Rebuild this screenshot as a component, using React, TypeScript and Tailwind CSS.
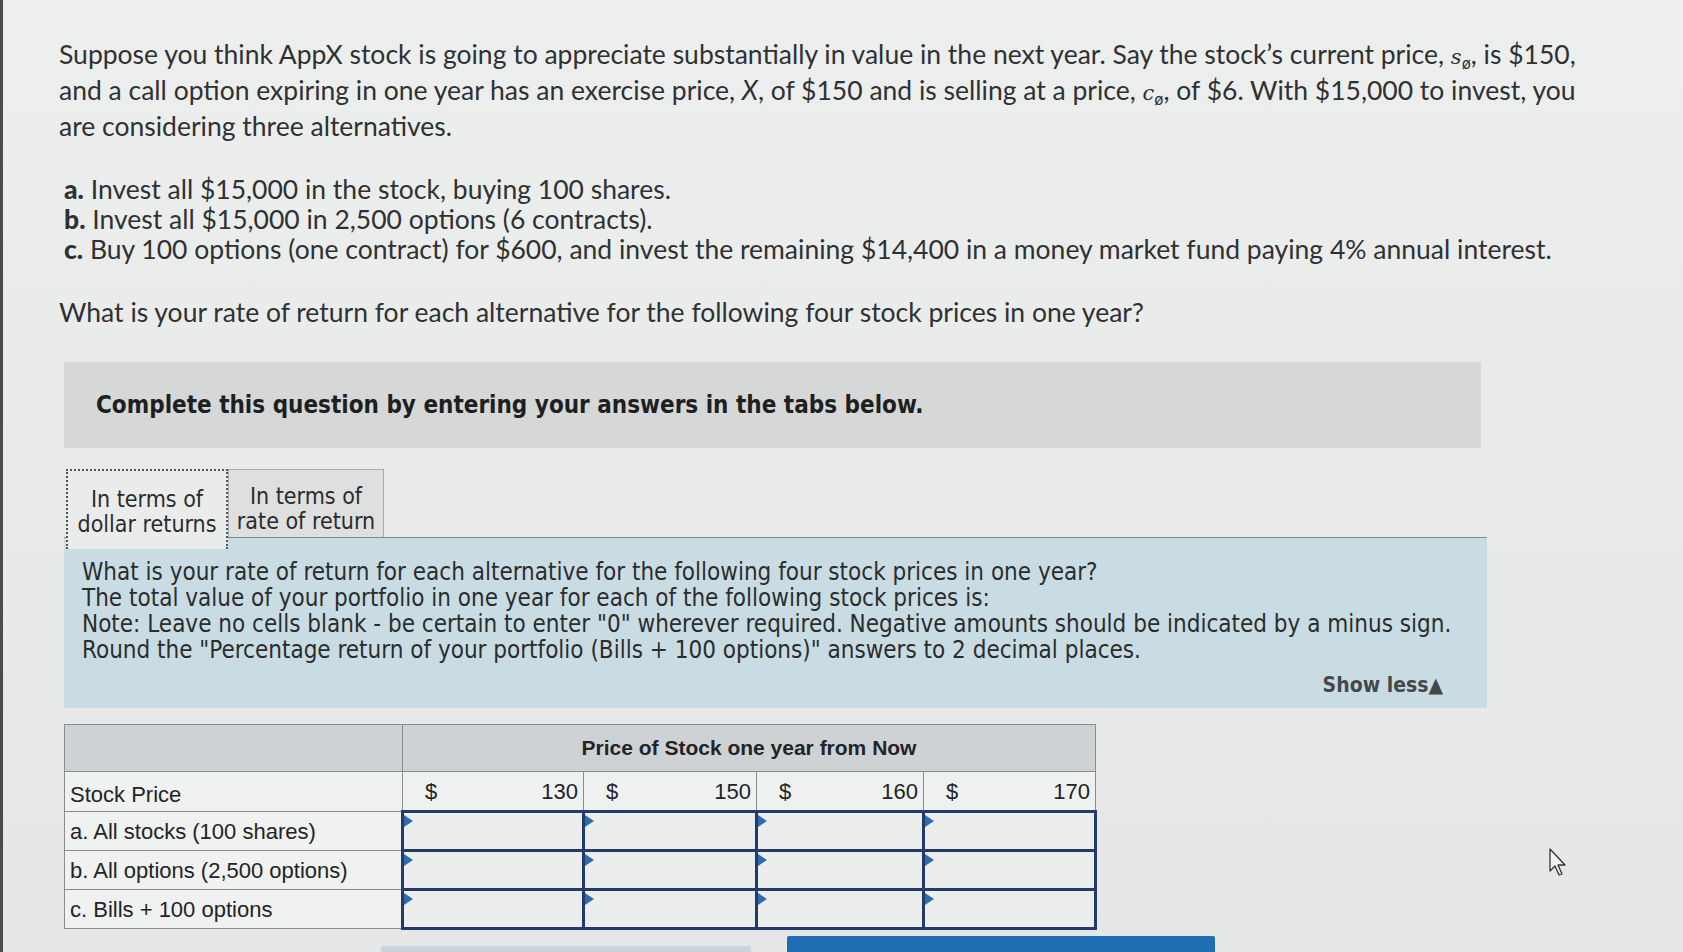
const prices = ['130', '150', '160', '170'];
const rows = ['a. All stocks (100 shares)', 'b. All options (2,500 options)', 'c. Bills + 100 options'];
const colW = ['w-[181px]', 'w-[173px]', 'w-[167px]', 'w-[172px]'];

function Sub({ base }: { base: string }) {
  return (
    <span className="whitespace-nowrap leading-none">
      <span className="italic font-['DejaVu_Serif',serif] text-[21px] leading-none">{base}</span>
      <span className="relative top-[5px] text-[15px] leading-none font-['DejaVu_Sans',sans-serif]">ø</span>
    </span>
  );
}

function Marker() {
  return (
    <svg className="absolute left-0 top-[2px]" width="9" height="12" viewBox="0 0 9 12">
      <path d="M0 0 L9 6 L0 12 Z" fill="#2e6cb0" />
    </svg>
  );
}

function Cursor() {
  return (
    <svg className="absolute left-[1546px] top-[848px]" width="20" height="30" viewBox="0 0 20 30">
      <path d="M1 1 L1 23 L6 18 L10 27 L13 26 L9 17 L16 17 Z" fill="#f4f4f4" stroke="#333" strokeWidth="1.3" strokeLinejoin="round" />
    </svg>
  );
}

export default function App() {
  return (
    <div className="relative h-[952px] w-full overflow-hidden border-l-[3px] border-[#4b4b4b] bg-gradient-to-b from-[#edefee] via-[#e9ebea] to-[#e4e7e6] text-[#2f3133]">
      <div className="pl-[56px] pt-[36px]">
        {/* question text */}
        <div className="font-['Lato',sans-serif] text-[26.5px] leading-[36px] whitespace-nowrap">
          <div className="h-[36px]">
            Suppose you think AppX stock is going to appreciate substantially in value in the next year. Say the stock’s current price, <Sub base="s" />, is $150,
          </div>
          <div className="h-[36px]">
            and a call option expiring in one year has an exercise price, <i>X</i>, of $150 and is selling at a price, <Sub base="c" />, of $6. With $15,000 to invest, you
          </div>
          <div className="h-[36px]">are considering three alternatives.</div>
        </div>

        <div className="mt-[30px] pl-[5px] font-['Lato',sans-serif] text-[26.5px] leading-[30px] whitespace-nowrap">
          <div>
            <b className="font-black">a.</b> Invest all $15,000 in the stock, buying 100 shares.
          </div>
          <div>
            <b className="font-black">b.</b> Invest all $15,000 in 2,500 options (6 contracts).
          </div>
          <div>
            <b className="font-black">c.</b> Buy 100 options (one contract) for $600, and invest the remaining $14,400 in a money market fund paying 4% annual interest.
          </div>
        </div>

        <div className="mt-[30px] font-['Lato',sans-serif] text-[26.5px] leading-[36px] whitespace-nowrap">
          What is your rate of return for each alternative for the following four stock prices in one year?
        </div>

        <div className="ml-[5px] mt-[32px] flex h-[86px] w-[1417px] items-center bg-[#d6d7d7] pl-[32px] font-['DejaVu_Sans_Condensed','DejaVu_Sans',sans-serif] text-[24px] font-bold text-[#1e1f20]">
          Complete this question by entering your answers in the tabs below.
        </div>

        {/* tabs */}
        <div className="ml-[7px] mt-[21px] flex items-start font-['DejaVu_Sans_Condensed','DejaVu_Sans',sans-serif] text-[23px] leading-[25px] text-[#2a2b2c]">
          <div className="relative z-10 -mb-[12px] flex h-[80px] w-[162px] flex-col items-center justify-start border-2 border-b-0 border-dotted border-[#555] bg-[#eaeceb] pt-[16px] text-center">
            <span>In terms of</span>
            <span className="whitespace-nowrap">dollar returns</span>
          </div>
          <div className="flex h-[68px] w-[156px] flex-col items-center border border-b-0 border-[#a9abab] bg-[#dedfdf] pt-[14px] text-center">
            <span>In terms of</span>
            <span className="whitespace-nowrap">rate of return</span>
          </div>
        </div>

        <div className="ml-[5px] h-[171px] w-[1423px] border-t border-[#7d8a8e] bg-[#c9dce3] pl-[18px] pr-[44px] pt-[21px] font-['DejaVu_Sans_Condensed','DejaVu_Sans',sans-serif] text-[24px] leading-[26px] text-[#2b2c2d]">
          <div className="whitespace-nowrap">What is your rate of return for each alternative for the following four stock prices in one year?</div>
          <div className="whitespace-nowrap">The total value of your portfolio in one year for each of the following stock prices is:</div>
          <div className="whitespace-nowrap">Note: Leave no cells blank - be certain to enter "0" wherever required. Negative amounts should be indicated by a minus sign.</div>
          <div className="whitespace-nowrap">Round the "Percentage return of your portfolio (Bills + 100 options)" answers to 2 decimal places.</div>
          <div className="mt-[9px] text-right text-[21px] font-semibold text-[#45484a]">Show less▲</div>
        </div>

        {/* table */}
        <table className="ml-[5px] mt-[16px] border-collapse font-['Liberation_Sans',Arial,sans-serif] text-[22px] text-[#232425]">
          <tbody>
            <tr className="h-[47px]">
              <td className="w-[338px] border border-[#8a8d90] bg-[#cfd2d5]" />
              <td colSpan={4} className="border border-[#8a8d90] bg-[#cfd2d5] text-center font-bold text-[21px]">
                Price of Stock one year from Now
              </td>
            </tr>
            <tr className="h-[39px]">
              <td className="border border-[#8a8d90] bg-[#f0f1f1] pl-[5px] pt-[6px]">Stock Price</td>
              {prices.map((p, i) => (
                <td key={p} className={`${colW[i]} border border-[#8a8d90] bg-[#eff0f0] px-[5px]`}>
                  <div className="flex justify-between">
                    <span className="pl-[17px]">$</span>
                    <span>{p}</span>
                  </div>
                </td>
              ))}
            </tr>
            {rows.map((r) => (
              <tr key={r} className="h-[39px]">
                <td className="border border-[#8a8d90] bg-[#f0f1f1] pl-[5px]">{r}</td>
                {prices.map((p) => (
                  <td key={p} className="relative border-[3px] border-[#243a68] bg-[#eceeee]">
                    <Marker />
                  </td>
                ))}
              </tr>
            ))}
          </tbody>
        </table>

        {/* buttons (cut off at bottom) */}
        <div className="ml-[322px] flex items-start gap-[36px]">
          <div className="mt-[16px] h-[40px] w-[370px] rounded-[2px] bg-[#c8d3dc]" />
          <div className="mt-[6px] h-[40px] w-[428px] rounded-[2px] bg-[#1f6db3]" />
        </div>
      </div>
      <Cursor />
    </div>
  );
}
